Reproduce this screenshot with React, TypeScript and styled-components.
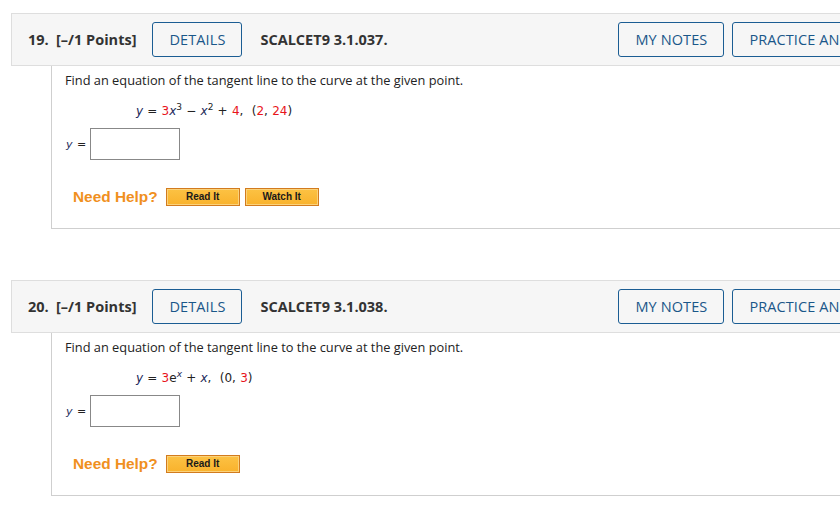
import type { ReactNode } from 'react'
import styled, { createGlobalStyle } from 'styled-components'

const GlobalStyle = createGlobalStyle`
  html, body {
    margin: 0;
    padding: 0;
    background: #fff;
    overflow: hidden;
  }
  body {
    font-family: 'Open Sans', 'Noto Sans', sans-serif;
    color: #333;
  }
`

type Question = {
  num: number
  code: string
  equation: () => ReactNode
  video: boolean
}

const questions: Question[] = [
  {
    num: 19,
    code: 'SCALCET9 3.1.037.',
    equation: () => (
      <>
        <Var>y</Var> = <Red>3</Red><Var>x</Var>
        <Sup>3</Sup> − <Var>x</Var>
        <Sup>2</Sup> + <Red>4</Red>,&nbsp; (<Red>2</Red>, <Red>24</Red>)
      </>
    ),
    video: true,
  },
  {
    num: 20,
    code: 'SCALCET9 3.1.038.',
    equation: () => (
      <>
        <Var>y</Var> = <Red>3</Red>e<Sup><Var>x</Var></Sup> + <Var>x</Var>,&nbsp; (0, <Red>3</Red>)
      </>
    ),
    video: false,
  },
]

export default function App() {
  return (
    <>
      <GlobalStyle />
      <Page>
        {questions.map((q) => (
          <QuestionBlock key={q.num}>
            <Header>
              <Number>{q.num}.</Number>
              <Points>[–/1 Points]</Points>
              <OutlineButton>DETAILS</OutlineButton>
              <Code>{q.code}</Code>
              <RightGroup>
                <OutlineButton>MY NOTES</OutlineButton>
                <OutlineButton>PRACTICE ANOTHER</OutlineButton>
              </RightGroup>
            </Header>
            <Body>
              <Prompt>Find an equation of the tangent line to the curve at the given point.</Prompt>
              <Equation>{q.equation()}</Equation>
              <AnswerRow>
                <Var>y</Var>&nbsp;=
                <AnswerInput type='text' />
              </AnswerRow>
              <HelpRow>
                <HelpLabel>Need Help?</HelpLabel>
                <HelpButton>Read It</HelpButton>
                {q.video && <HelpButton>Watch It</HelpButton>}
              </HelpRow>
            </Body>
          </QuestionBlock>
        ))}
      </Page>
    </>
  )
}

const Page = styled.div`
  width: 1000px;
  padding: 13px 0 0 11px;
  display: flex;
  flex-direction: column;
  gap: 51px;
`

const QuestionBlock = styled.section`
  display: flex;
  flex-direction: column;
`

const Header = styled.div`
  height: 51px;
  display: flex;
  align-items: center;
  padding-left: 16px;
  background: #f6f6f6;
  border: 1px solid #dedede;
  font-size: 14.5px;
`

const Number = styled.span`
  font-weight: 700;
  color: #333;
  width: 28px;
`

const Points = styled.span`
  font-weight: 700;
  color: #333;
  margin-right: 16px;
`

const OutlineButton = styled.button`
  height: 35px;
  padding: 0 16px;
  border: 1px solid #1b5d93;
  border-radius: 3px;
  background: #f6f6f6;
  color: #1a5789;
  font-family: 'Open Sans', 'Noto Sans', sans-serif;
  font-size: 14.5px;
  letter-spacing: 0.1px;
  white-space: nowrap;
`

const Code = styled.span`
  font-weight: 700;
  color: #333;
  margin-left: 18px;
`

const RightGroup = styled.div`
  margin-left: auto;
  display: flex;
  gap: 8px;
  margin-right: 106px;
`

const Body = styled.div`
  margin-left: 40px;
  border-left: 1px solid #cfcfcf;
  border-bottom: 1px solid #cfcfcf;
  padding: 5px 0 22px 13px;
  font-size: 12.8px;
  color: #222;
`

const Prompt = styled.p`
  margin: 0;
  line-height: 18px;
`

const Equation = styled.div`
  margin: 11px 0 0 71px;
  line-height: 22px;
  font-family: 'DejaVu Sans', Verdana, sans-serif;
  font-size: 12px;
  word-spacing: 0.4px;
  color: #222;
`

const Var = styled.i`
  font-family: 'DejaVu Sans', Verdana, sans-serif;
  color: #1c2a5a;
`

const Red = styled.span`
  color: #e8141b;
`

const Sup = styled.sup`
  font-size: 9px;
  line-height: 0;
  color: #222;
`

const AnswerRow = styled.div`
  display: flex;
  align-items: center;
  margin-top: 6px;
  font-family: 'DejaVu Sans', Verdana, sans-serif;
  font-size: 11px;
  padding-left: 1px;
  gap: 1px;
`

const AnswerInput = styled.input`
  box-sizing: border-box;
  width: 90px;
  height: 32px;
  margin: 0 0 0 3px;
  padding: 0;
  border: 1px solid #888;
  border-radius: 0;
`

const HelpRow = styled.div`
  display: flex;
  align-items: center;
  margin-top: 28px;
  padding-left: 8px;
  gap: 5px;
`

const HelpLabel = styled.span`
  font-family: 'Liberation Sans', Arial, sans-serif;
  font-weight: 700;
  font-size: 15.4px;
  color: #f0901e;
  margin-right: 3px;
`

const HelpButton = styled.button`
  width: 74px;
  height: 18px;
  padding: 0;
  border: 1px solid #d27b1e;
  box-shadow: inset 0 0 0 1px #fbd27a;
  background: linear-gradient(#fcc244, #f9b22c);
  color: #1a1a1a;
  font-family: 'Liberation Sans', Arial, sans-serif;
  font-weight: 700;
  font-size: 10px;
  line-height: 16px;
`
